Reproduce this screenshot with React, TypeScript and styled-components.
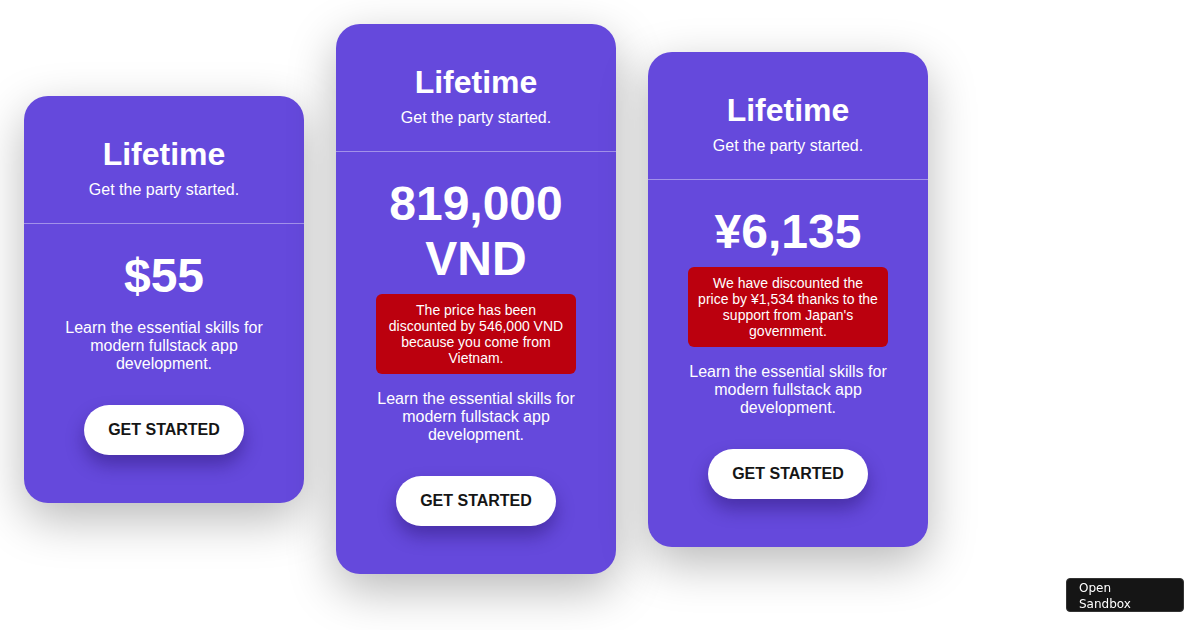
import React from "react";
import styled, { createGlobalStyle } from "styled-components";

interface IPlan {
  price: string;
  note?: string;
}

const plans: IPlan[] = [
  { price: "$55" },
  {
    price: "819,000 VND",
    note: "The price has been discounted by 546,000 VND because you come from Vietnam.",
  },
  {
    price: "¥6,135",
    note: "We have discounted the price by ¥1,534 thanks to the support from Japan's government.",
  },
];

const GlobalStyle = createGlobalStyle`
  html, body {
    min-height: 100%;
  }
  body {
    margin: 0;
    min-height: 100vh;
    font-family: "Liberation Sans", Arial, sans-serif;
  }
`;

const PlanCard = (props: IPlan) => {
  const { price, note } = props;
  return (
    <StyledCard>
      <header>
        <h1>Lifetime</h1>
        <p>Get the party started.</p>
      </header>
      <div className="body">
        <div className="price">{price}</div>
        {note && <div className="note">{note}</div>}
        <p className="desc">
          Learn the essential skills for modern fullstack app development.
        </p>
        <button>GET STARTED</button>
      </div>
    </StyledCard>
  );
};

const StyledCard = styled.div`
  width: 280px;
  background-color: #6549dc;
  border-radius: 24px;
  color: #fff;
  text-align: center;
  box-shadow: 0 16px 48px rgba(0, 0, 0, 0.28);
  padding-bottom: 48px;

  & > header {
    padding: 40px 20px 24px;
    border-bottom: 1px solid rgba(255, 255, 255, 0.4);
    & > h1 {
      margin: 0 0 8px;
      font-size: 32px;
      line-height: 37px;
      font-weight: 700;
    }
    & > p {
      margin: 0;
      font-size: 16px;
      line-height: 18px;
    }
  }

  & > .body {
    padding: 24px 40px 0;
    display: flex;
    flex-direction: column;
    align-items: center;
    & > .price {
      font-size: 48px;
      font-weight: 700;
      line-height: 55px;
      margin-bottom: 16px;
    }
    & > .note {
      margin: -8px 0 16px;
      width: 100%;
      box-sizing: border-box;
      background-color: #bb000e;
      border-radius: 6px;
      padding: 8px 10px;
      font-size: 14px;
      line-height: 16px;
    }
    & > .desc {
      margin: 0 0 32px;
      font-size: 16px;
      line-height: 18px;
    }
    & > button {
      all: unset;
      cursor: pointer;
      width: 160px;
      height: 50px;
      border-radius: 25px;
      background: #fff;
      color: #151515;
      font-size: 16px;
      font-weight: 700;
      box-shadow: 0 10px 18px rgba(30, 10, 90, 0.4);
    }
  }
`;

const Cards = styled.div`
  display: flex;
  align-items: center;
  gap: 32px;
  padding: 24px;
`;

const SandboxButton = styled.a`
  position: fixed;
  right: 16px;
  bottom: 18px;
  width: 118px;
  height: 34px;
  box-sizing: border-box;
  padding: 1px 12px;
  background: #151515;
  border: 1px solid #333;
  border-radius: 4px;
  color: #fff;
  font-family: "DejaVu Sans", sans-serif;
  font-size: 12px;
  line-height: 16px;
  text-decoration: none;
  word-spacing: 60px;
`;

const App = () => {
  return (
    <>
      <GlobalStyle />
      <Cards>
        {plans.map((plan) => (
          <PlanCard key={plan.price} {...plan} />
        ))}
      </Cards>
      <SandboxButton href="#">Open Sandbox</SandboxButton>
    </>
  );
};

export default App;
